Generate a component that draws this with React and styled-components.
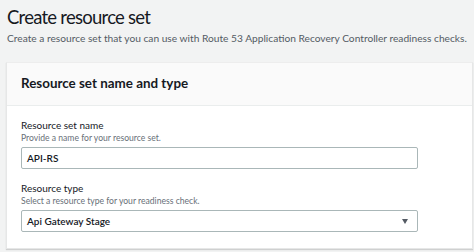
import React from "react";
import styled, { createGlobalStyle } from "styled-components";

const Global = createGlobalStyle`
  html, body { margin: 0; padding: 0; background: #f2f3f3; }
  body { font-family: "Lato", "Noto Sans", sans-serif; color: #16191f; }
  * { box-sizing: border-box; }
`;

const Page = styled.div`
  width: 474px;
  height: 252px;
  overflow: hidden;
  padding: 5px 1px 0 6px;
  display: flex;
  flex-direction: column;
`;

const Title = styled.h1`
  margin: 0 0 0 1px;
  font-size: 18.5px;
  font-weight: 400;
  letter-spacing: -0.75px;
  line-height: 24px;
  color: #16191f;
`;

const Subtitle = styled.p`
  margin: 3px 0 0 1px;
  font-size: 10.2px;
  line-height: 12px;
  white-space: nowrap;
  color: #545b64;
`;

const Card = styled.section`
  margin-top: 18px;
  background: #fff;
  border: 1px solid #e6e7e7;
  border-top-color: #ededed;
  box-shadow: 0 1px 1px rgba(0, 0, 0, 0.14);
  display: flex;
  flex-direction: column;
`;

const CardHeader = styled.header`
  height: 43px;
  padding: 0 14px;
  display: flex;
  align-items: center;
  background: #fafafa;
  border-bottom: 1px solid #eaeded;
`;

const CardTitle = styled.h2`
  margin: 0 0 2px 0;
  font-size: 13.4px;
  font-weight: 700;
  color: #16191f;
`;

const CardBody = styled.div`
  padding: 13px 14px 16px 14px;
  display: flex;
  flex-direction: column;
  gap: 13px;
`;

const Field = styled.div`
  display: flex;
  flex-direction: column;
`;

const Label = styled.label`
  font-size: 10px;
  line-height: 12px;
  color: #16191f;
`;

const Hint = styled.span`
  margin: 2px 0 4px 0;
  font-size: 8.6px;
  line-height: 10px;
  color: #687078;
`;

const Box = styled.div`
  width: 397px;
  height: 22px;
  border: 1px solid #aab7b8;
  border-radius: 2px;
  background: #fff;
  display: flex;
  align-items: center;
  justify-content: space-between;
  padding: 0 9px 0 5px;
  font-size: 10px;
  font-weight: 600;
  color: #16191f;
`;

const Caret = styled.span`
  width: 0;
  height: 0;
  border-left: 3.5px solid transparent;
  border-right: 3.5px solid transparent;
  border-top: 5px solid #545b64;
`;

export default function App() {
  return (
    <>
      <Global />
      <Page>
        <Title>Create resource set</Title>
        <Subtitle>
          Create a resource set that you can use with Route 53 Application Recovery Controller readiness checks.
        </Subtitle>
        <Card>
          <CardHeader>
            <CardTitle>Resource set name and type</CardTitle>
          </CardHeader>
          <CardBody>
            <Field>
              <Label>Resource set name</Label>
              <Hint>Provide a name for your resource set.</Hint>
              <Box>API-RS</Box>
            </Field>
            <Field>
              <Label>Resource type</Label>
              <Hint>Select a resource type for your readiness check.</Hint>
              <Box>
                Api Gateway Stage
                <Caret />
              </Box>
            </Field>
          </CardBody>
        </Card>
      </Page>
    </>
  );
}
